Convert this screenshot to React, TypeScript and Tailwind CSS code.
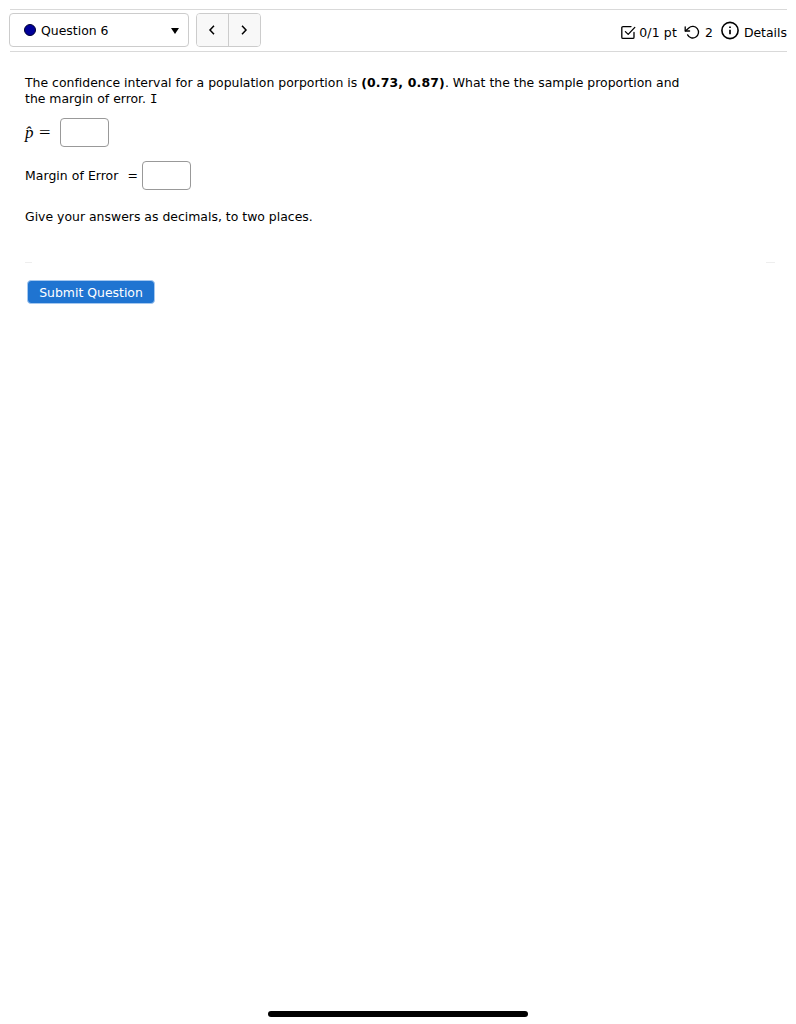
import { useState } from "react";
import type { ReactNode } from "react";

function CheckIcon() {
  return (
    <svg className="h-4 w-4 shrink-0" viewBox="0 0 16 16" fill="none" stroke="currentColor" strokeWidth="1.3" strokeLinecap="round" strokeLinejoin="round">
      <path d="M5.4 6.6l2.8 2.8L14.8 2.4" />
      <path d="M14 7.4v4.8a1.2 1.2 0 0 1-1.2 1.2H3a1.2 1.2 0 0 1-1.2-1.2V2.8A1.2 1.2 0 0 1 3 1.6h8" />
    </svg>
  );
}

function RetryIcon() {
  return (
    <svg className="h-4 w-4 shrink-0" viewBox="0 0 16 16" fill="none" stroke="currentColor" strokeWidth="1.3" strokeLinecap="round" strokeLinejoin="round">
      <path d="M1.2 1.8v4.2h4.4" />
      <path d="M1.4 5.9L4.8 2.9a5.8 5.8 0 1 1-1.2 7" />
    </svg>
  );
}

function InfoIcon() {
  return (
    <svg className="h-5 w-5 shrink-0" viewBox="0 0 20 20" fill="none" stroke="currentColor" strokeWidth="1.6">
      <circle cx="10" cy="9.5" r="8.1" />
      <path d="M10 8.7v4.6" strokeWidth="1.7" />
      <path d="M10 5.4v1.7" strokeWidth="1.7" />
    </svg>
  );
}

function NavButton({ label, children }: { label: string; children: ReactNode }) {
  return (
    <button aria-label={label} className="flex flex-1 items-center justify-center bg-[#f8f8f8]">
      <svg className="-ml-px h-[10px] w-[8px]" viewBox="0 0 8 10" fill="none" stroke="currentColor" strokeWidth="1.5">
        {children}
      </svg>
    </button>
  );
}

function AnswerBox({ label }: { label: string }) {
  const [value, setValue] = useState("");
  return (
    <input
      aria-label={label}
      value={value}
      onChange={(e) => setValue(e.target.value)}
      className="h-[29px] w-[49px] rounded-[4px] border border-[#999] bg-white px-1.5"
    />
  );
}

export default function App() {
  return (
    <div className="flex h-screen flex-col overflow-hidden bg-white font-['DejaVu_Sans',sans-serif] text-[12.45px] leading-4 text-black [font-variant-ligatures:none]">
      {/* Question bar */}
      <header className="mt-[9px] mr-[9px] ml-[10px] flex h-[43px] items-start border-y border-[#d9d9d9] pt-[3px]">
        <button className="-ml-px flex h-[34px] w-[180px] items-center rounded-[4px] border border-[#ccc] pr-[9px] pl-[14px]">
          <span className="mr-[5px] h-3 w-3 rounded-full border border-[#000033] bg-[#000099]" />
          <span className="pt-px">Question 6</span>
          <svg className="mt-px ml-auto h-[6px] w-[8px]" viewBox="0 0 8 6" fill="currentColor">
            <path d="M0 0h8L4 6z" />
          </svg>
        </button>
        <div className="ml-[7px] flex h-[34px] w-[65px] divide-x divide-[#ccc] overflow-hidden rounded-[4px] border border-[#ccc]">
          <NavButton label="Previous question">
            <path d="M6 .8L2 5l4 4.2" />
          </NavButton>
          <NavButton label="Next question">
            <path d="M2 .8L6 5 2 9.2" />
          </NavButton>
        </div>
        <div className="ml-auto flex h-[34px] items-center pt-[5px]">
          <CheckIcon />
          <span className="ml-[3px] tracking-[0.15px]">0/1 pt</span>
          <span className="ml-[7px] flex">
            <RetryIcon />
          </span>
          <span className="ml-[5px]">2</span>
          <span className="-mt-1 ml-[7px] flex">
            <InfoIcon />
          </span>
          <span className="ml-1">Details</span>
        </div>
      </header>

      {/* Question text and answers */}
      <main className="flex flex-1 flex-col items-start pt-[23px] pl-[25px]">
        <p className="whitespace-nowrap">
          The confidence interval for a population porportion is <b className="tracking-[0.16px]">(0.73, 0.87)</b>. What the the sample proportion and
          <br />
          the margin of error. <span className="font-['DejaVu_Sans_Mono',monospace]">I</span>
        </p>
        <div className="mt-[11px] flex items-center">
          <span className="w-[35px] font-['Liberation_Serif',serif] text-[17px]">
            <i className="mr-[5px]">p̂</i>
            <span className="inline-block origin-left scale-x-120">=</span>
          </span>
          <AnswerBox label="Sample proportion" />
        </div>
        <div className="mt-[14px] flex items-center">
          <span className="mr-[9px] tracking-[0.05px]">Margin of Error</span>
          <span className="w-[15px]">=</span>
          <AnswerBox label="Margin of error" />
        </div>
        <p className="mt-[19px]">Give your answers as decimals, to two places.</p>
        <div className="mt-[37px] flex w-[750px] justify-between">
          <span className="h-px w-[7px] bg-[#eee]" />
          <span className="h-px w-[9px] bg-[#eee]" />
        </div>
        <button className="mt-[17px] ml-[2px] h-6 w-[128px] rounded-[4px] border border-[#a5c8ef] bg-[#1f74d1] pt-px text-white">
          Submit Question
        </button>
      </main>

      <div className="mb-[7px] h-[6px] w-[260px] self-center rounded-full bg-black" />
    </div>
  );
}
